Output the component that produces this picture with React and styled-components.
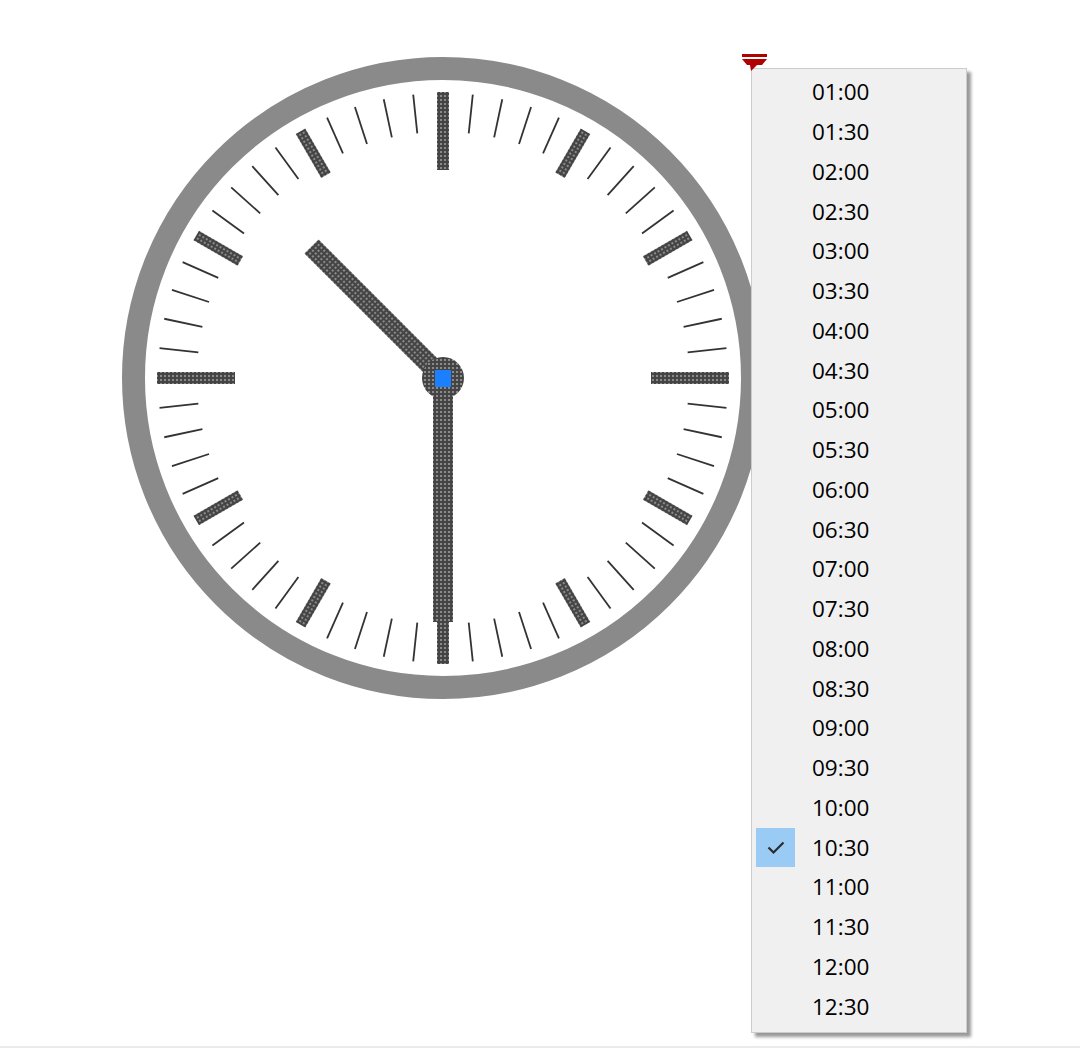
import React from 'react';
import styled, { createGlobalStyle } from 'styled-components';

const GlobalStyle = createGlobalStyle`
    html, body {
        margin: 0;
        padding: 0;
        background: #ffffff;
    }
    body {
        font-family: "Segoe UI", "Open Sans", "Noto Sans", sans-serif;
    }
`;

const Page = styled.div`
    position: relative;
    height: 1048px;
    border-bottom: 2px solid #ebebeb;
    padding: 56px 0 0 121px;
    box-sizing: border-box;
`;

const ClockFace = styled.svg`
    display: block;
    width: 644px;
    height: 644px;
`;

const Popup = styled.div`
    position: absolute;
    left: 742px;
    top: 54px;
`;

const Marker = styled.svg`
    display: block;
    width: 26px;
    height: 18px;
`;

const Menu = styled.ul`
    list-style: none;
    margin: -4px 0 0 9px;
    padding: 3px 0 6px;
    width: 214px;
    background: #f0f0f0;
    border: 1px solid #cccccc;
    box-shadow: 4px 4px 3px rgba(0, 0, 0, 0.4);
`;

const Item = styled.li`
    position: relative;
    display: flex;
    align-items: center;
    height: 39.75px;
    padding-left: 60px;
    font-size: 22.5px;
    color: #000000;
`;

const CheckBox = styled.span`
    position: absolute;
    left: 4px;
    top: 1px;
    width: 39px;
    height: 39px;
    display: flex;
    align-items: center;
    justify-content: center;
    background: #99cbf5;
`;

const times = [];
for (let h = 1; h <= 12; h++) {
    const hh = String(h).padStart(2, '0');
    times.push(`${hh}:00`, `${hh}:30`);
}

function Ticks() {
    const ticks = [];
    for (let i = 0; i < 60; i++) {
        let r1 = 246, r2 = 285, w = 1.8, fill = '#333';
        if (i % 15 === 0) {
            r1 = 208; r2 = 286; w = 12; fill = 'url(#hatch)';
        } else if (i % 5 === 0) {
            r1 = 234; r2 = 285; w = 11; fill = 'url(#hatch)';
        }
        ticks.push(
            <rect
                key={i}
                x={-w / 2}
                y={-r2}
                width={w}
                height={r2 - r1}
                fill={fill}
                transform={`rotate(${i * 6})`}
            />
        );
    }
    return <g>{ticks}</g>;
}

export default function App() {
    const selected = '10:30';
    return (
        <>
            <GlobalStyle />
            <Page>
                <ClockFace viewBox="-322 -322 644 644">
                    <defs>
                        <pattern id="hatch" width="4" height="4" patternUnits="userSpaceOnUse">
                            <rect width="4" height="4" fill="#444" />
                            <circle cx="2" cy="2" r="1.1" fill="#9c9c9c" />
                        </pattern>
                    </defs>
                    <circle r="309.5" fill="#fff" stroke="#8a8a8a" strokeWidth="23" />
                    <Ticks />
                    <rect x="-10" y="-186" width="20" height="186" fill="url(#hatch)" transform="rotate(-45)" />
                    <rect x="-10" y="0" width="20" height="244" fill="url(#hatch)" />
                    <circle r="21" fill="url(#hatch)" />
                    <rect x="-8" y="-8" width="16" height="17" fill="#1a80ff" />
                </ClockFace>
                <Popup>
                    <Marker viewBox="0 0 26 18">
                        <rect x="0" y="0" width="25" height="3" fill="#b00000" />
                        <path d="M0 5 H25 L20 11 H15 L9 17 L8 11 H5 Z" fill="#b00000" />
                    </Marker>
                    <Menu>
                        {times.map(t => (
                            <Item key={t}>
                                {t === selected && (
                                    <CheckBox>
                                        <svg width="18" height="14" viewBox="0 0 18 14">
                                            <path d="M1.5 6.5 L6.5 11.5 L16.5 1.5" fill="none" stroke="#2b2b2b" strokeWidth="2.2" />
                                        </svg>
                                    </CheckBox>
                                )}
                                {t}
                            </Item>
                        ))}
                    </Menu>
                </Popup>
            </Page>
        </>
    );
}
